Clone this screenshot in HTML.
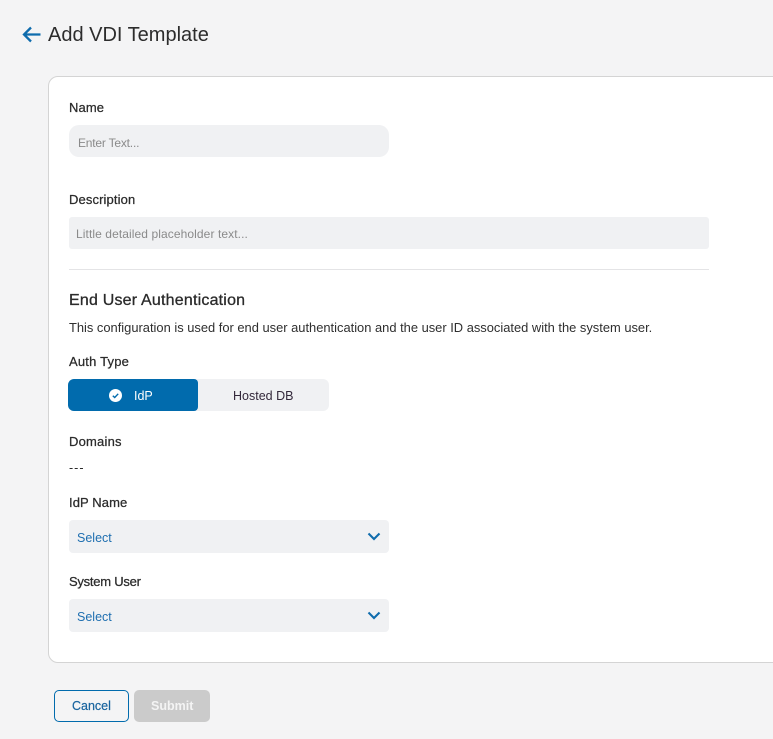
<!DOCTYPE html>
<html lang="en">
<head>
<meta charset="utf-8">
<title>Add VDI Template</title>
<style>
html,body{margin:0;padding:0;background:#f4f4f5}
body{width:773px;height:739px;position:relative;overflow:hidden;font-family:"Liberation Sans",sans-serif;color:#2a2a2a}
.t{position:absolute;white-space:nowrap;line-height:16px;font-size:12.5px}
.l{font-size:13px;letter-spacing:.12px;color:#2b2b2b;-webkit-text-stroke:.25px #2b2b2b}
.b{position:absolute;background:#f0f1f3}
.ph{color:#8a8a8a;font-size:12px}
.s{color:#1f6fb0;font-size:12.5px}
</style>
</head>
<body>
<svg style="position:absolute;left:22px;top:26px" width="20" height="18" viewBox="0 0 20 18" fill="none"><path d="M9 1.5 L2 8.5 L9 15.5 M2.5 8.5 H18.5" stroke="#0f6cad" stroke-width="2.3"/></svg>
<div class="t" style="left:48px;top:23px;font-size:20px;line-height:24px;color:#2c2c2c">Add VDI Template</div>

<div style="position:absolute;left:48px;top:76px;width:760px;height:585px;box-sizing:content-box;background:#fff;border:1px solid #d4d4d4;border-radius:10px"></div>

<div class="t l" style="left:69px;top:100px">Name</div>
<div class="b" style="left:69px;top:125px;width:320px;height:32px;border-radius:10px"></div>
<div class="t ph" style="left:78px;top:135px;letter-spacing:-.2px">Enter Text...</div>

<div class="t l" style="left:69px;top:192px">Description</div>
<div class="b" style="left:69px;top:217px;width:640px;height:32px;border-radius:3px"></div>
<div class="t ph" style="left:76px;top:226px;letter-spacing:.09px">Little detailed placeholder text...</div>

<div style="position:absolute;left:69px;top:269px;width:640px;height:1px;background:#e4e4e6"></div>

<div class="t" style="left:69px;top:292px;font-size:16px;letter-spacing:.2px;line-height:18px;color:#2b2b2b;-webkit-text-stroke:.3px #2b2b2b">End User Authentication</div>
<div class="t" style="left:69px;top:320px;font-size:12.9px;color:#2f2f2f">This configuration is used for end user authentication and the user ID associated with the system user.</div>

<div class="t l" style="left:69px;top:354px;letter-spacing:.2px">Auth Type</div>
<div class="b" style="left:68px;top:379px;width:261px;height:32px;border-radius:6px"></div>
<div style="position:absolute;left:68px;top:379px;width:130px;height:32px;background:#016bad;border-radius:6px 4px 4px 6px"></div>
<svg style="position:absolute;left:109px;top:389px" width="13" height="13" viewBox="0 0 13 13"><circle cx="6.5" cy="6.5" r="6.5" fill="#fff"/><path d="M3.8 6.7 L5.7 8.5 L9.2 4.8" fill="none" stroke="#016bad" stroke-width="1.4"/></svg>
<div class="t" style="left:134px;top:388px;color:#fff;font-size:12.5px">IdP</div>
<div class="t" style="left:233px;top:388px;color:#33283a;font-size:12.5px">Hosted DB</div>

<div class="t l" style="left:69px;top:434px;letter-spacing:.2px">Domains</div>
<div class="t" style="left:69px;top:460px;font-size:12.5px;letter-spacing:1px">---</div>

<div class="t l" style="left:69px;top:495px;letter-spacing:.1px">IdP Name</div>
<div class="b" style="left:69px;top:520px;width:320px;height:33px;border-radius:4px"></div>
<div class="t s" style="left:77px;top:530px">Select</div>
<svg style="position:absolute;left:367px;top:532px" width="14" height="9" viewBox="0 0 14 9"><path d="M1.5 1.5 L7 7 L12.5 1.5" fill="none" stroke="#0f6cad" stroke-width="2.1"/></svg>

<div class="t l" style="left:69px;top:574px;letter-spacing:-.25px">System User</div>
<div class="b" style="left:69px;top:599px;width:320px;height:33px;border-radius:4px"></div>
<div class="t s" style="left:77px;top:609px">Select</div>
<svg style="position:absolute;left:367px;top:611px" width="14" height="9" viewBox="0 0 14 9"><path d="M1.5 1.5 L7 7 L12.5 1.5" fill="none" stroke="#0f6cad" stroke-width="2.1"/></svg>

<div style="position:absolute;left:54px;top:690px;width:73px;height:30px;border:1px solid #016bad;border-radius:5px"></div>
<div class="t" style="left:72px;top:698px;color:#1a659f;font-size:12.5px;-webkit-text-stroke:.2px #1a659f">Cancel</div>
<div style="position:absolute;left:134px;top:690px;width:76px;height:32px;background:#cbcbcb;border-radius:5px"></div>
<div class="t" style="left:151px;top:698px;color:#f4f4f4;font-size:12.5px;font-weight:bold">Submit</div>
</body>
</html>
